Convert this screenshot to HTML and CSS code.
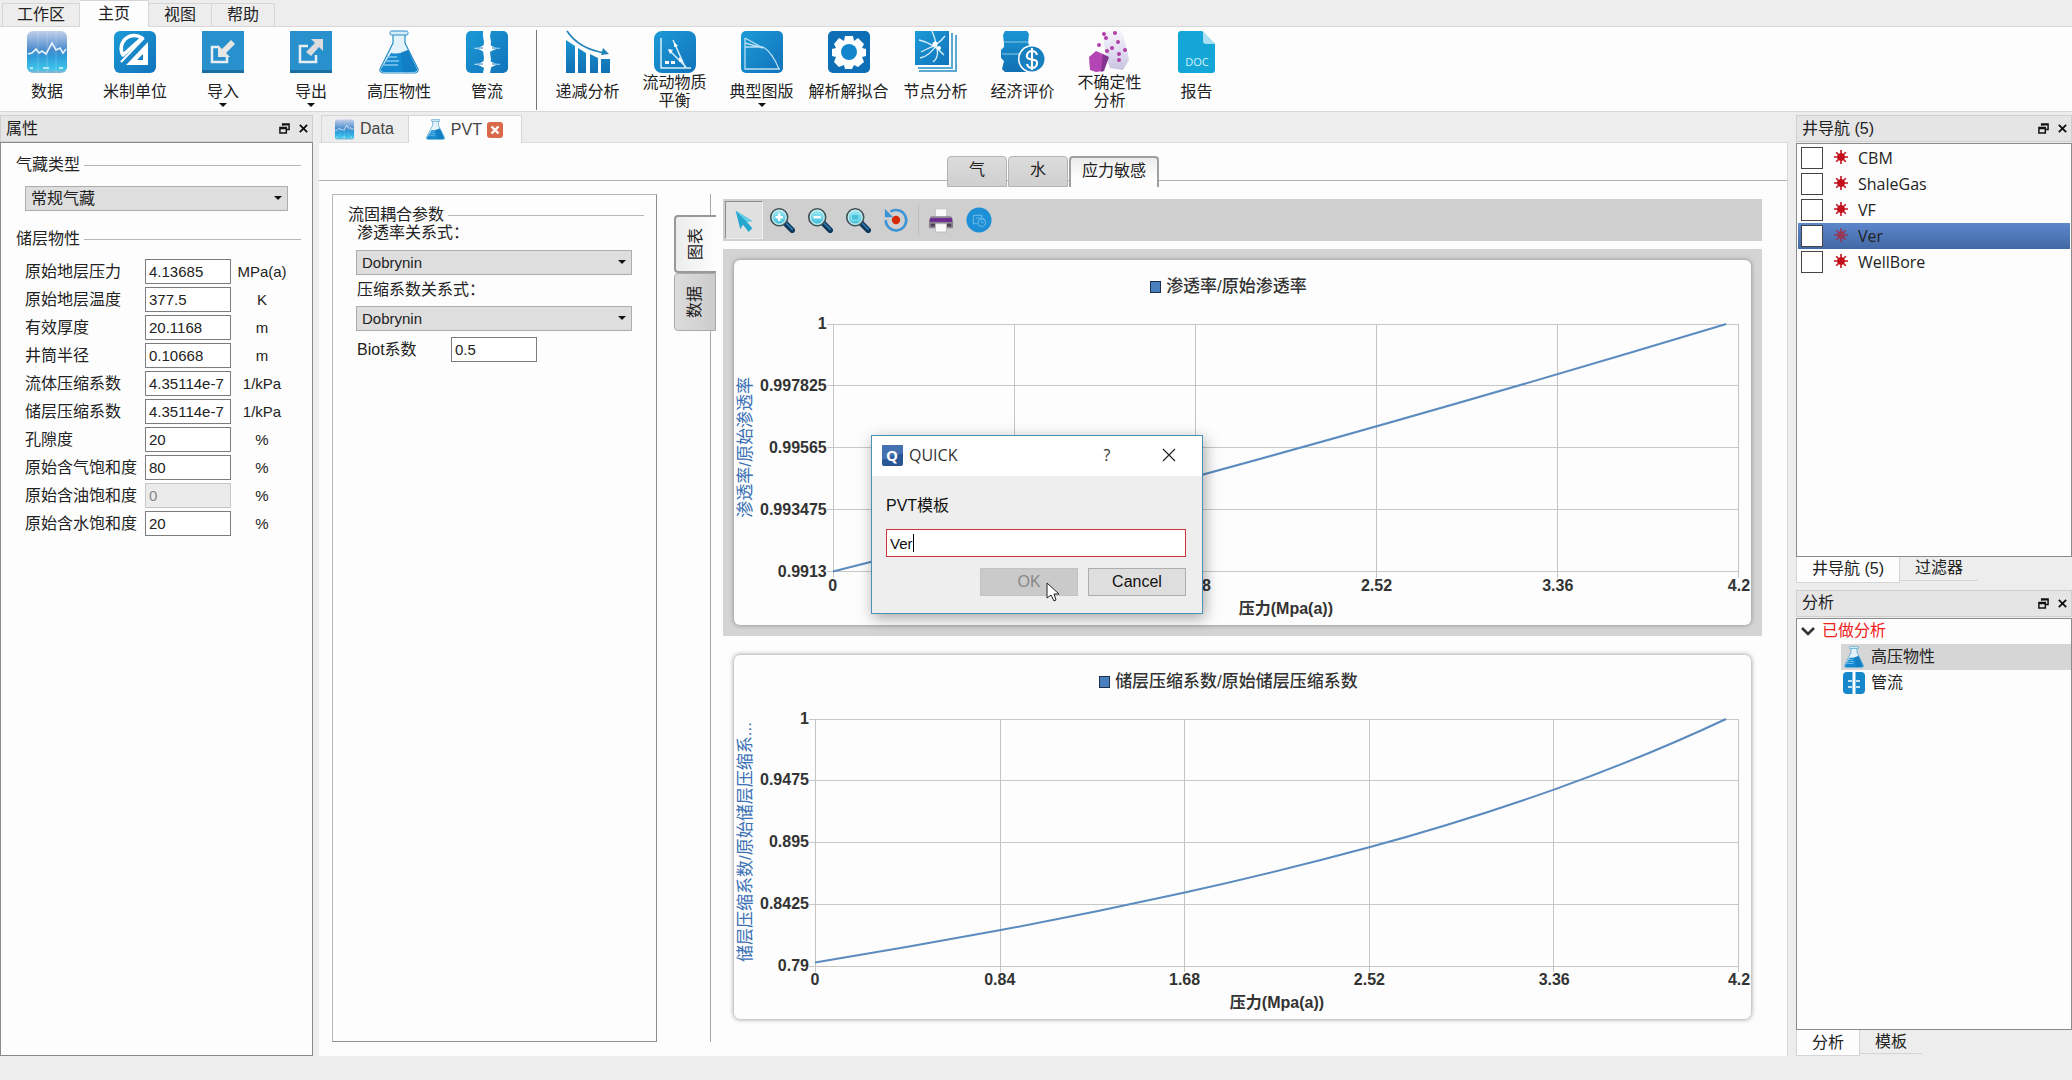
FILE: index.html
```html
<!DOCTYPE html>
<html lang="zh-CN">
<head>
<meta charset="utf-8">
<title>QUICK</title>
<link rel="stylesheet" href="styles.css">
</head>
<body>
<svg class="defs" aria-hidden="true">
  <defs>
    <linearGradient id="g-blue" x1="0" y1="0" x2="1" y2="1"><stop offset="0" stop-color="#1b9ad6"/><stop offset="1" stop-color="#1273ba"/></linearGradient>
    <linearGradient id="g-blue-v" x1="0" y1="0" x2="0" y2="1"><stop offset="0" stop-color="#1a95d3"/><stop offset="1" stop-color="#1170b3"/></linearGradient>
    <linearGradient id="g-data" x1="0" y1="0" x2="0" y2="1"><stop offset="0" stop-color="#c3cfe9"/><stop offset=".45" stop-color="#4a8ccd"/><stop offset=".6" stop-color="#2f9ad8"/><stop offset=".9" stop-color="#3cc3ea"/><stop offset="1" stop-color="#8fb4cf"/></linearGradient>
    <linearGradient id="g-lens" x1="0" y1="0" x2="0" y2="1"><stop offset="0" stop-color="#a8f0fa"/><stop offset="1" stop-color="#35b8d8"/></linearGradient>
    <linearGradient id="g-smoke" x1="0" y1="0" x2="0" y2="1"><stop offset="0" stop-color="#f6f4fb"/><stop offset=".6" stop-color="#dcd9f0"/><stop offset="1" stop-color="#c9c3dd"/></linearGradient>
    <symbol id="i-data" viewBox="0 0 44 44"><rect x="2" y="1" width="40" height="42" rx="6" fill="url(#g-data)"/><path d="M13 1v42M22 1v42M31 1v42" stroke="#fff" stroke-opacity=".2"/><path d="M3 24l4-1 4-4 3 4 3-2 4 3 6-11 4 7 4-2 3 5 3-4" fill="none" stroke="#e4f2fb" stroke-width="1.6"/><path d="M5 38h3M18 38h6M34 38h4" stroke="#dff5fc" stroke-width="1.5"/></symbol>
    <symbol id="i-flask" viewBox="0 0 44 44"><path d="M16 4h12v9l13 26q1 3-3 4H6q-4-1-3-4l13-26z" fill="#e4f3fa" stroke="#2b8fc4" stroke-width="1.2"/><path d="M14 23q8 2 17-3l9 19q1 2-2 3H6q-3-1-2-3z" fill="#1489cf"/><path d="M24 22l7-2 9 20q-8 3-14 2z" fill="#0f74b8" opacity=".5"/><rect x="13" y="1" width="18" height="4" rx="1.5" fill="#d6edf7" stroke="#2b8fc4"/><path d="M10 27h10M8 31h14M7 35h14" stroke="#84c8ee" stroke-width="1.5"/></symbol>
    <symbol id="i-pipe" viewBox="0 0 44 44"><rect x="1" y="1" width="42" height="42" rx="5" fill="url(#g-blue)"/><path d="M18 1h8l-1 5 1 6-1 10 1 8-2 4 2 4-1 5h-7l1-5-1-4 1-6-1-7 1-9-1-6z" fill="#fff"/><path d="M8 18q7 0 11-3h6q4 3 11 3-7 1-11 4h-6q-4-3-11-4zM8 34q7 0 11-3h6q4 3 11 3-7 1-11 4h-6q-4-3-11-4z" fill="#fff"/><path d="M12 18h6M27 18h6M12 34h6M27 34h6" stroke="#1a84c8" stroke-width="1.2"/></symbol>
    <symbol id="i-pipe-small" viewBox="0 0 22 22"><rect width="22" height="22" rx="4" fill="#1787cb"/><path d="M11 0v22" stroke="#fff" stroke-width="3"/><path d="M5 9h4M13 9h4M5 15h4M13 15h4" stroke="#fff" stroke-width="1.500"/></symbol>
    <symbol id="i-float" viewBox="0 0 12 12"><path d="M4 3V1h7v6H8M4 2h7" fill="none" stroke="#111" stroke-width="1.6"/><path d="M1 5h7v6H1zM1 6h7" fill="none" stroke="#111" stroke-width="1.6"/></symbol>
    <symbol id="i-close" viewBox="0 0 12 12"><path d="M2 2l8 8M10 2l-8 8" stroke="#111" stroke-width="2"/></symbol>
    <symbol id="i-burst" viewBox="0 0 14 14"><circle cx="7" cy="7" r="3.800" fill="#c0000c"/><path d="M7 0v14M0 7h14M2.200 2.200l9.600 9.600M11.800 2.200l-9.600 9.600" stroke="#c4101c" stroke-width="1.600"/></symbol>
    <symbol id="i-lens" viewBox="0 0 28 28"><path d="M17 17l8 8" stroke="#0d3557" stroke-width="6" stroke-linecap="round"/><path d="M18 17l7 7" stroke="#2c79ad" stroke-width="2" stroke-linecap="round"/><circle cx="11" cy="11" r="9" fill="url(#g-lens)" stroke="#3f5258" stroke-width="2"/><circle cx="11" cy="11" r="7.500" fill="none" stroke="#c5e8e6" stroke-width="1.500"/></symbol>
  </defs>
</svg>

<div class="app">
  <nav class="menu">
    <button>工作区</button><button class="on">主页</button><button>视图</button><button>帮助</button>
  </nav>

  <header class="ribbon">
    <div class="tools">
      <button class="tool"><svg><use href="#i-data"/></svg><span>数据</span></button>
      <button class="tool"><svg viewBox="0 0 44 44"><rect x="1" y="1" width="42" height="42" rx="6" fill="url(#g-blue)"/><path d="M10 25A13 13 0 0 1 29 8z" fill="none" stroke="#fff" stroke-width="3.500" stroke-linejoin="round"/><path d="M13 35L35 12v23z" fill="#fff"/><path d="M24 30l6-6v6z" fill="#1680c4"/><path d="M8 32L31 8" stroke="#fff" stroke-width="2"/></svg><span>米制单位</span></button>
      <button class="tool drop"><svg viewBox="0 0 44 44"><path d="M1 1h42v42H1z" fill="#2890cc"/><path d="M1 40h42v3H1z" fill="#1c6ea3"/><path d="M17 17h-6v15h15v-6" fill="none" stroke="#e8eef2" stroke-width="2.500"/><path d="M17 27V15l4 4 9-9 4 4-9 9 4 4z" fill="#e8e6e4"/></svg><span>导入</span></button>
      <button class="tool drop"><svg viewBox="0 0 44 44"><path d="M1 1h42v42H1z" fill="#2890cc"/><path d="M1 40h42v3H1z" fill="#1c6ea3"/><path d="M19 16h-8v16h16v-7" fill="none" stroke="#e8eef2" stroke-width="2.500"/><path d="M34 9v12l-4-4-8 9-5-4 9-9-4-4z" fill="#dcdcdc"/></svg><span>导出</span></button>
      <button class="tool"><svg><use href="#i-flask"/></svg><span>高压物性</span></button>
      <button class="tool"><svg><use href="#i-pipe"/></svg><span>管流</span></button>
    </div>
    <div class="tools analysis">
      <button class="tool"><svg viewBox="0 0 44 44"><path d="M0 10l9 6v27H0zM12 18l8 5v20h-8zM24 24l8 4v15h-8zM35 29h9v14h-9z" fill="url(#g-blue-v)"/><path d="M1 1q12 18 38 22" fill="none" stroke="#2183b8" stroke-width="1.600"/><path d="M37 18l6 6-8 1z" fill="#2183b8"/></svg><span>递减分析</span></button>
      <button class="tool"><svg viewBox="0 0 44 44"><rect x="1" y="1" width="42" height="42" rx="8" fill="url(#g-blue)"/><path d="M8 8v30h30M20 10l12 27M16 20l17 17" fill="none" stroke="#d9eefa" stroke-width="1.500"/><path d="M15 19l5 1-3 4zM21 12l4 4-4 1zM12 31h4v3h-4zM18 31h4v3h-4zM26 27l4 4-4 1z" fill="#fff"/></svg><span>流动物质<br>平衡</span></button>
      <button class="tool drop"><svg viewBox="0 0 44 44"><rect x="1" y="1" width="42" height="42" rx="5" fill="url(#g-blue)"/><path d="M5 8v31h35M5 8l18 10M5 13l18 5M5 17h18q9 5 16 22" fill="none" stroke="#b9dff4" stroke-width="1.300"/></svg><span>典型图版</span></button>
      <button class="tool"><svg viewBox="0 0 44 44"><rect x="1" y="1" width="42" height="42" rx="5" fill="#0f6fb6"/><path d="M18 6h8l1 5 4-3 6 6-2 4 4 1v7l-4 1 2 5-6 5-4-2-2 4h-7l-1-4-5 2-5-5 2-5-4-1v-7l4-1-2-4 5-6 5 3z" fill="#fff"/><circle cx="22" cy="22" r="8" fill="#1286cd"/></svg><span>解析解拟合</span></button>
      <button class="tool"><svg viewBox="0 0 44 44"><path d="M5 41h37V5M4 38h34V3" fill="none" stroke="#5aa8d4" stroke-width="2"/><path d="M1 1h34v34H1z" fill="url(#g-blue)"/><path d="M18 1q4 10 5 17 2 10-4 14M31 6q-7 9-18 13l-6 3M5 10q14 3 25 15M6 28q10-2 17-14" fill="none" stroke="#d9effa" stroke-width="1.300"/><circle cx="21" cy="14" r="2.500" fill="#fff"/><circle cx="25" cy="18" r="2" fill="#fff"/></svg><span>节点分析</span></button>
      <button class="tool"><svg viewBox="0 0 44 44"><path d="M4 1h22l2 3-1 9 2 3v8l-3 3v15H4l-3-3 2-8-3-3v-8l3-3v-3L2 5z" fill="url(#g-blue-v)"/><path d="M3 12h25M1 24h26" stroke="#8cc9e8" stroke-width="1"/><circle cx="31" cy="29" r="14" fill="#fff"/><circle cx="31" cy="29" r="12.500" fill="#187fbe"/><path d="M36 25q-1-4-5-4t-5 4 5 4.500 5 4.500-5 4-5-4M31 18v22" fill="none" stroke="#fff" stroke-width="2.200"/></svg><span>经济评价</span></button>
      <button class="tool"><svg viewBox="0 0 44 44"><path d="M14 1h20l4 15 3 14-6 10-13-2-4-12z" fill="url(#g-smoke)"/><path d="M1 27l7-6 7 3 5 4-5 13-7 1-6-2z" fill="#b445b4"/><path d="M15 24l6 3-5 14-3 1z" fill="#84358f"/><g fill="#b23fa5"><circle cx="16" cy="4" r="2"/><circle cx="27" cy="3" r="2"/><circle cx="11" cy="15" r="2"/><circle cx="18" cy="8" r="2"/><circle cx="30" cy="12" r="2"/><circle cx="24" cy="18" r="2"/><circle cx="37" cy="20" r="2"/><circle cx="19" cy="21" r="2"/><circle cx="31" cy="24" r="2"/><circle cx="31" cy="30" r="2"/></g></svg><span>不确定性<br>分析</span></button>
      <button class="tool"><svg viewBox="0 0 44 44"><path d="M6 1h21l13 13v26q0 3-3 3H6q-3 0-3-3V4q0-3 3-3z" fill="#14a6d6"/><path d="M28 1l12 13H31q-3 0-3-3z" fill="#a9dff0"/><text x="22" y="36" text-anchor="middle" class="doc">DOC</text></svg><span>报告</span></button>
    </div>
  </header>

  <div class="workspace">
    <aside class="dock props">
      <h2 class="dock-title">属性<span class="dock-btns"><button aria-label="浮动"><svg><use href="#i-float"/></svg></button><button aria-label="关闭"><svg><use href="#i-close"/></svg></button></span></h2>
      <form class="dock-body">
        <h3 class="group">气藏类型</h3>
        <div class="select type"><select aria-label="气藏类型"><option>常规气藏</option></select></div>
        <h3 class="group">储层物性</h3>
        <div class="fields">
          <label for="f1">原始地层压力</label><input id="f1" value="4.13685"><span>MPa(a)</span>
          <label for="f2">原始地层温度</label><input id="f2" value="377.5"><span>K</span>
          <label for="f3">有效厚度</label><input id="f3" value="20.1168"><span>m</span>
          <label for="f4">井筒半径</label><input id="f4" value="0.10668"><span>m</span>
          <label for="f5">流体压缩系数</label><input id="f5" value="4.35114e-7"><span>1/kPa</span>
          <label for="f6">储层压缩系数</label><input id="f6" value="4.35114e-7"><span>1/kPa</span>
          <label for="f7">孔隙度</label><input id="f7" value="20"><span>%</span>
          <label for="f8">原始含气饱和度</label><input id="f8" value="80"><span>%</span>
          <label for="f9">原始含油饱和度</label><input id="f9" value="0" disabled><span>%</span>
          <label for="f10">原始含水饱和度</label><input id="f10" value="20"><span>%</span>
        </div>
      </form>
    </aside>

    <main class="center">
      <div class="doc-tabs">
        <button><svg><use href="#i-data"/></svg>Data</button>
        <button class="on"><svg><use href="#i-flask"/></svg>PVT<svg class="x" viewBox="0 0 16 16"><rect width="16" height="16" rx="3" fill="#d9694a"/><path d="M4.500 4.500l7 7M11.500 4.500l-7 7" stroke="#fff" stroke-width="2.400"/></svg></button>
      </div>
      <div class="doc-page">
        <div class="sub-tabs"><button>气</button><button>水</button><button class="on">应力敏感</button></div>
        <div class="page-body">
          <form class="params">
            <h3 class="group">流固耦合参数</h3>
            <label class="line" for="p1">渗透率关系式：</label>
            <div class="select"><select id="p1"><option>Dobrynin</option></select></div>
            <label class="line tall" for="p2">压缩系数关系式：</label>
            <div class="select"><select id="p2"><option>Dobrynin</option></select></div>
            <div class="biot"><label for="p3">Biot系数</label><input id="p3" value="0.5"></div>
          </form>
          <div class="side-tabs"><button class="on"><span>图表</span></button><button><span>数据</span></button></div>
          <section class="charts">
            <div class="toolbar">
              <button class="on" aria-label="选择"><svg viewBox="0 0 28 28"><path d="M5 4l18 11-6 1 6 7-4 4-6-8-3 5z" fill="#27a7d0"/><path d="M5 4l18 11-6 1z" fill="#67cfe8"/></svg></button>
              <button aria-label="放大"><svg viewBox="0 0 28 28"><use href="#i-lens"/><path d="M11 7v8M7 11h8" stroke="#fff" stroke-width="2.500"/></svg></button>
              <button aria-label="缩小"><svg viewBox="0 0 28 28"><use href="#i-lens"/><path d="M7 11h8" stroke="#fff" stroke-width="2.500"/></svg></button>
              <button aria-label="框选缩放"><svg viewBox="0 0 28 28"><use href="#i-lens"/><path d="M7 8h8v6H7z" fill="#48bfd8" stroke="#8fe6f0"/></svg></button>
              <button aria-label="还原"><svg viewBox="0 0 28 28"><path d="M8 5A11 11 0 1 1 3 14" fill="none" stroke="#3c94d6" stroke-width="2.800"/><path d="M2 2v9h9z" fill="#3c94d6"/><circle cx="14" cy="14" r="4.500" fill="#d42a0a"/></svg></button>
              <i></i>
              <button aria-label="打印"><svg viewBox="0 0 28 28"><path d="M8 2h12v10H8z" fill="#fafafa" stroke="#c8c8c8"/><path d="M3 10h22l2 5v8H1v-8z" fill="#8a8390"/><path d="M2 12h24v4H2z" fill="#6d2b91"/><path d="M3 18h22v3H3z" fill="#4c3f55"/><path d="M8 18h12v9H8z" fill="#fafafa" stroke="#bbb"/></svg></button>
              <button aria-label="刷新"><svg viewBox="0 0 28 28"><circle cx="14" cy="14" r="13.500" fill="#1d8fd6"/><path d="M8 9h9v3M8 9v9h4M11 12h6M18 12l3 3" fill="none" stroke="#5fb4e4" stroke-width="1.300"/><circle cx="17" cy="17" r="4" fill="none" stroke="#5fb4e4" stroke-width="1.300"/><path d="M17 15v2h2" fill="none" stroke="#5fb4e4"/></svg></button>
            </div>
            <div class="chart-area sel">
              <figure class="chart">
                <figcaption><i></i>渗透率/原始渗透率</figcaption>
                <div class="y-name"><span>渗透率/原始渗透率</span></div>
                <div class="y-ticks"><span>1</span><span>0.997825</span><span>0.99565</span><span>0.993475</span><span>0.9913</span></div>
                <div class="plot">
                  <svg class="grid-lines"><line x1="-6" x2="100%" y1="0" y2="0"/><line x1="-6" x2="100%" y1="25%" y2="25%"/><line x1="-6" x2="100%" y1="50%" y2="50%"/><line x1="-6" x2="100%" y1="75%" y2="75%"/><line x1="-6" x2="100%" y1="100%" y2="100%"/></svg>
                  <div class="v-lines"><i></i><i></i><i></i><i></i><i></i><i></i></div>
                  <svg class="curve" viewBox="0 0 905 247" preserveAspectRatio="none"><path d="M0 247C300 172 600 88 892 0"/></svg>
                </div>
                <div class="x-axis">
                  <div class="x-ticks"><span>0</span><span>0.84</span><span>1.68</span><span>2.52</span><span>3.36</span><span>4.2</span></div>
                  <div class="x-name">压力(Mpa(a))</div>
                </div>
              </figure>
            </div>
            <div class="chart-area">
              <figure class="chart">
                <figcaption><i></i>储层压缩系数/原始储层压缩系数</figcaption>
                <div class="y-name"><span>储层压缩系数/原始储层压缩系...</span></div>
                <div class="y-ticks"><span>1</span><span>0.9475</span><span>0.895</span><span>0.8425</span><span>0.79</span></div>
                <div class="plot">
                  <svg class="grid-lines"><line x1="-6" x2="100%" y1="0" y2="0"/><line x1="-6" x2="100%" y1="25%" y2="25%"/><line x1="-6" x2="100%" y1="50%" y2="50%"/><line x1="-6" x2="100%" y1="75%" y2="75%"/><line x1="-6" x2="100%" y1="100%" y2="100%"/></svg>
                  <div class="v-lines"><i></i><i></i><i></i><i></i><i></i><i></i></div>
                  <svg class="curve" viewBox="0 0 922 246" preserveAspectRatio="none"><path d="M0 242Q92 227 184 210T369 172.500 553 127.500 738 70Q830 37 909 0"/></svg>
                </div>
                <div class="x-axis">
                  <div class="x-ticks"><span>0</span><span>0.84</span><span>1.68</span><span>2.52</span><span>3.36</span><span>4.2</span></div>
                  <div class="x-name">压力(Mpa(a))</div>
                </div>
              </figure>
            </div>
          </section>
        </div>
      </div>
    </main>

    <div class="right">
      <aside class="dock">
        <h2 class="dock-title">井导航 (5)<span class="dock-btns"><button aria-label="浮动"><svg><use href="#i-float"/></svg></button><button aria-label="关闭"><svg><use href="#i-close"/></svg></button></span></h2>
        <div class="dock-body wells">
          <label><input type="checkbox"><svg><use href="#i-burst"/></svg>CBM</label>
          <label><input type="checkbox"><svg><use href="#i-burst"/></svg>ShaleGas</label>
          <label><input type="checkbox"><svg><use href="#i-burst"/></svg>VF</label>
          <label class="on"><input type="checkbox"><svg><use href="#i-burst"/></svg>Ver</label>
          <label><input type="checkbox"><svg><use href="#i-burst"/></svg>WellBore</label>
        </div>
        <div class="dock-tabs"><button class="on">井导航 (5)</button><button>过滤器</button></div>
      </aside>
      <aside class="dock">
        <h2 class="dock-title">分析<span class="dock-btns"><button aria-label="浮动"><svg><use href="#i-float"/></svg></button><button aria-label="关闭"><svg><use href="#i-close"/></svg></button></span></h2>
        <div class="dock-body tree">
          <div class="root"><svg viewBox="0 0 14 10"><path d="M1 2l6 6 6-6" fill="none" stroke="#333" stroke-width="2.600"/></svg>已做分析</div>
          <div class="leaf on"><svg><use href="#i-flask"/></svg>高压物性</div>
          <div class="leaf"><svg><use href="#i-pipe-small"/></svg>管流</div>
        </div>
        <div class="dock-tabs"><button class="on">分析</button><button>模板</button></div>
      </aside>
    </div>
  </div>

  <div class="dialog" role="dialog" aria-labelledby="dlg-title">
    <div class="dlg-bar">
      <svg class="logo" viewBox="0 0 21 21"><rect width="21" height="21" rx="2" fill="#2a5696"/><path d="M0 0h21v8L0 15z" fill="#4472b0"/><text x="10" y="16" text-anchor="middle" class="q">Q</text></svg>
      <span id="dlg-title">QUICK</span>
      <button class="help">?</button>
      <button class="shut" aria-label="关闭"><svg viewBox="0 0 14 14"><path d="M1 1l12 12M13 1L1 13" stroke="#222" stroke-width="1.200"/></svg></button>
    </div>
    <form class="dlg-body">
      <label for="tpl">PVT模板</label>
      <div class="edit"><input id="tpl" value="Ver"><i></i></div>
      <div class="actions"><button type="button" disabled>OK</button><button type="button">Cancel</button></div>
    </form>
    <svg class="cursor" viewBox="0 0 14 20"><path d="M1 1v15l4-3 3 6 2-1-2-6h5z" fill="#fff" stroke="#222"/></svg>
  </div>
</div>
</body>
</html>
```
FILE: styles.css
```css
* { box-sizing: border-box; }

body {
  margin: 0;
  background: #ededed;
  color: #222;
  font: 16px/20px "Liberation Sans", "Noto Sans CJK SC", sans-serif;
}

button, input, select { font: inherit; color: inherit; margin: 0; padding: 0; border: 0; background: none; border-radius: 0; }
h2, h3, figure { margin: 0; font-size: 16px; font-weight: normal; }
svg { display: block; flex: none; }
.defs { position: absolute; width: 0; height: 0; }

.app { position: relative; display: flex; flex-direction: column; height: 100vh; padding-bottom: 24px; }

/* menu tabs */
.menu { display: flex; align-items: flex-end; height: 27px; padding-left: 2px; border-bottom: 1px solid #d8d8d8; }
.menu button { height: 23px; padding: 0 15px; border: 1px solid #d6d6d6; border-width: 1px 1px 0 0; }
.menu button:first-child { padding: 0 14px; border-left-width: 1px; }
.menu button.on { height: 27px; margin-bottom: -1px; padding: 0 18px; background: #fdfdfd; }

/* ribbon */
.ribbon { display: flex; flex: none; height: 85px; padding: 3px 3px 1px; background: #fdfdfd; border-bottom: 1px solid #d8d8d8; }
.tools { display: flex; }
.analysis { margin-left: 5px; padding-left: 7px; border-left: 1px solid #777; }
.tool { position: relative; display: flex; flex-direction: column; align-items: center; width: 88px; }
.analysis .tool { width: 87px; }
.tool svg { width: 44px; height: 44px; }
.tool span { display: flex; align-items: center; height: 38px; line-height: 18px; white-space: nowrap; }
.drop::after { content: ""; position: absolute; top: 73px; left: 40px; border: 4px solid transparent; border-top-color: #111; border-bottom: 0; }
.doc { font: 11px "Open Sans", sans-serif; fill: #d8f2fa; }

/* docks */
.workspace { display: flex; flex: 1; min-height: 0; padding-top: 3px; }
.dock { display: flex; flex-direction: column; min-height: 0; }
.props { width: 313px; }
.dock-title { display: flex; flex: none; align-items: center; height: 27px; padding: 0 3px 0 5px; background: #e5e5e5; border: 1px solid #cfcfcf; }
.dock-btns { display: flex; gap: 8px; margin-left: auto; }
.dock-btns button { width: 11px; height: 11px; }
.dock-btns svg { width: 11px; height: 11px; }
.dock-body { flex: 1; min-height: 0; background: #fdfdfd; border: 1px solid #8a8a8a; }

.group { display: flex; align-items: center; gap: 4px; }
.group::after { content: ""; flex: 1; height: 1px; background: #b8b8b8; }
.props .dock-body { padding: 12px 11px 0 15px; }

.select { position: relative; height: 25px; }
.select select { display: block; width: 100%; height: 100%; padding-left: 5px; appearance: none; background: #dedede; border: 1px solid #adadad; font-size: 15px; }
.select::after { content: ""; position: absolute; top: 10px; right: 6px; border: 4px solid transparent; border-top-color: #111; border-bottom: 0; pointer-events: none; }
.type { width: 263px; margin: 11px 0 18px 9px; }
.type select { font-size: 16px; }

.fields { display: grid; grid-template-columns: 120px 86px 62px; grid-auto-rows: 25px; row-gap: 3px; align-items: center; margin: 10px 0 0 9px; }
.fields span { text-align: center; font-size: 15px; }
.fields label { white-space: nowrap; }
.fields input, .biot input { width: 86px; height: 25px; padding-left: 3px; background: #fff; border: 1px solid #7c7c7c; font-size: 15px; }
.fields input:disabled { background: #ebebeb; border-color: #c6c6c6; color: #888; }

/* document area */
.center { display: flex; flex: 1; flex-direction: column; min-width: 0; margin: 0 8px 0 6px; }
.doc-tabs { display: flex; flex: none; height: 28px; padding-left: 2px; border-bottom: 1px solid #dcdcdc; }
.doc-tabs button { display: flex; align-items: center; gap: 5px; padding: 0 14px 0 12px; border: 1px solid #d6d6d6; border-width: 1px 1px 0; color: #444; }
.doc-tabs .on { margin-bottom: -1px; padding: 0 18px 0 16px; background: #fdfdfd; border-left: 0; }
.doc-tabs svg { width: 21px; height: 21px; }
.doc-tabs .x { width: 16px; height: 16px; }
.doc-page { display: flex; flex: 1; flex-direction: column; min-height: 0; background: #fdfdfd; border-right: 1px solid #d8d8d8; }
.sub-tabs { display: flex; flex: none; justify-content: center; height: 38px; padding-top: 13px; border-bottom: 1px solid #b0b0b0; }
.sub-tabs button { height: 31px; padding: 0 21px 4px; background: linear-gradient(#dcdcdc, #cfcfcf); border: 1px solid #b4b4b4; border-radius: 4px 4px 0 0; }
.sub-tabs button + button { margin-left: 1px; }
.sub-tabs .on { padding: 0 11px 4px; background: linear-gradient(#ececec, #fdfdfd 70%); border: 2px solid #a0a0a0; border-bottom: 0; }
.page-body { display: flex; flex: 1; min-height: 0; padding: 13px 25px 14px 13px; }

.params { width: 325px; padding: 10px 12px 0 15px; border: 1px solid #8f8f8f; border-color: #b8b8b8 #8f8f8f #8f8f8f #b8b8b8; }
.params .line { display: block; height: 25px; padding: 0 0 0 9px; line-height: 16px; }
.params .group { height: 20px; }
.params .tall { height: 31px; padding-top: 7px; }
.params .select { width: 276px; margin-left: 8px; }
.biot { display: flex; align-items: center; margin: 6px 0 0 9px; }
.biot label { width: 94px; }

.side-tabs { width: 54px; padding: 21px 0 0 17px; border-right: 1px solid #a8a8a8; }
.side-tabs button { display: flex; align-items: center; justify-content: center; width: 42px; height: 58px; background: linear-gradient(90deg, #dcdcdc, #cccccc); border: 1px solid #aaa; border-radius: 4px 0 0 4px; }
.side-tabs .on { background: linear-gradient(90deg, #ececec, #fdfdfd); border: 2px solid #999; border-right: 0; }
.side-tabs span, .y-name span { writing-mode: vertical-rl; text-orientation: sideways; transform: rotate(180deg); white-space: nowrap; }

.charts { display: flex; flex: 1; flex-direction: column; gap: 8px; min-width: 0; margin-left: 12px; padding: 5px 0 12px; }
.toolbar { display: flex; flex: none; align-items: center; height: 42px; padding-left: 2px; background: #cfcfcf; }
.toolbar button { display: grid; place-items: center; width: 38px; height: 38px; }
.toolbar svg { width: 26px; height: 26px; }
.toolbar .on { background: #e0e0e0; border: 1px solid #eee; border-color: #8c8c8c #eee #eee #8c8c8c; }
.toolbar i { width: 1px; height: 30px; margin: 0 3px; background: #bcbcbc; }
.chart-area { display: flex; flex: 1; min-height: 0; padding: 11px; }
.chart-area.sel { background: #d4d4d4; }
.chart {
  display: grid; flex: 1; min-width: 0;
  grid-template: 64px 1fr 53px / 26px auto 1fr;
  padding-right: 12px; background: #fdfdfd; border-radius: 6px;
  box-shadow: 0 0 5px #888;
  color: #333; font-weight: bold;
}
.chart figcaption { grid-column: 1 / -1; display: flex; align-items: center; justify-content: center; gap: 5px; height: 54px; padding-right: 16px; font-size: 17px; font-weight: 500; }
figcaption i { width: 11px; height: 12px; background: #4a7fc0; border: 1px solid #1c2f4c; }
.y-name { display: flex; align-items: center; padding-left: 2px; min-height: 0; color: #3a70b4; font-size: 17px; font-weight: normal; }
.y-ticks { display: flex; flex-direction: column; justify-content: space-between; padding-right: 6px; text-align: right; }
.y-ticks span { display: flex; align-items: center; justify-content: flex-end; height: 0; }
.plot { display: grid; min-width: 0; min-height: 0; }
.plot > * { grid-area: 1 / 1; width: 100%; height: 100%; overflow: visible; min-height: 0; }
.grid-lines line { stroke: #c8c8c8; stroke-width: 1; shape-rendering: crispEdges; }
.v-lines { display: flex; justify-content: space-between; }
.v-lines i { width: 1px; margin-bottom: -6px; background: #c4c4c4; }
.curve path { fill: none; stroke: #5b8bbf; stroke-width: 2; vector-effect: non-scaling-stroke; }
.x-axis { grid-column: 3; }
.x-ticks { display: flex; justify-content: space-between; padding-top: 4px; }
.x-ticks span { display: flex; justify-content: center; width: 0; }
.x-name { margin-top: 3px; text-align: center; }

/* right column */
.right { display: grid; grid-template-rows: 467fr 466fr; gap: 7px; width: 276px; }
.right .dock-title { margin-bottom: 1px; }
.wells { padding: 1px; font-family: "Open Sans", "Noto Sans CJK SC", sans-serif; }
.wells label { display: flex; align-items: center; height: 26px; padding-left: 3px; }
.wells input { width: 22px; height: 22px; appearance: none; background: #fff; border: 1px solid #444; }
.wells svg { width: 14px; height: 14px; margin: 0 10px 2px 11px; }
.wells .on { background: linear-gradient(#5c87ca, #4368a6); }
.wells .on svg { opacity: .6; }
.dock-tabs { display: flex; flex: none; height: 26px; }
.dock-tabs button { height: 24px; padding: 0 15px; border-bottom: 1px solid #d4d4d4; }
.dock-tabs .on { height: 26px; padding: 0 15px; background: #fdfdfd; border: 1px solid #d4d4d4; border-top: 0; }
.root { display: flex; align-items: center; gap: 7px; height: 25px; padding-left: 4px; color: #f02020; }
.root svg { width: 14px; height: 10px; }
.leaf { display: flex; align-items: center; gap: 6px; height: 26px; margin-left: 44px; padding-left: 2px; }
.leaf svg { width: 22px; height: 22px; }
.leaf.on { background: #d6d6d6; }

/* template dialog */
.dialog { position: absolute; top: 435px; left: 50%; width: 332px; margin-left: -165px; background: #eee; border: 1px solid #4a90b8; box-shadow: 2px 4px 14px rgba(0, 0, 0, .35); }
.dlg-bar { display: flex; align-items: center; height: 40px; padding: 0 26px 2px 10px; background: #fff; font: 16px/20px "Open Sans", sans-serif; color: #333; }
.logo { width: 21px; height: 21px; margin-right: 6px; }
.q { font: bold 15px "Open Sans", sans-serif; fill: #fff; }
.help { width: 16px; margin-left: auto; }
.shut { margin-left: 47px; }
.shut svg { width: 14px; height: 14px; }
.dlg-body { display: flex; flex-direction: column; padding: 20px 16px 17px 14px; color: #111; }
.dlg-body label { height: 33px; }
.edit { position: relative; height: 28px; }
.edit input { width: 100%; height: 100%; padding-left: 3px; background: #fff; border: 1px solid #d0343c; font-size: 15px; }
.edit i { position: absolute; top: 5px; left: 27px; width: 1px; height: 18px; background: #000; }
.actions { display: flex; justify-content: flex-end; gap: 10px; margin-top: 11px; }
.actions button { width: 98px; height: 28px; background: #dedede; border: 1px solid #adadad; }
.actions button:disabled { background: #cacaca; border-color: #c2c2c2; color: #888; }
.cursor { position: absolute; top: 146px; left: 174px; width: 14px; height: 20px; }
```
